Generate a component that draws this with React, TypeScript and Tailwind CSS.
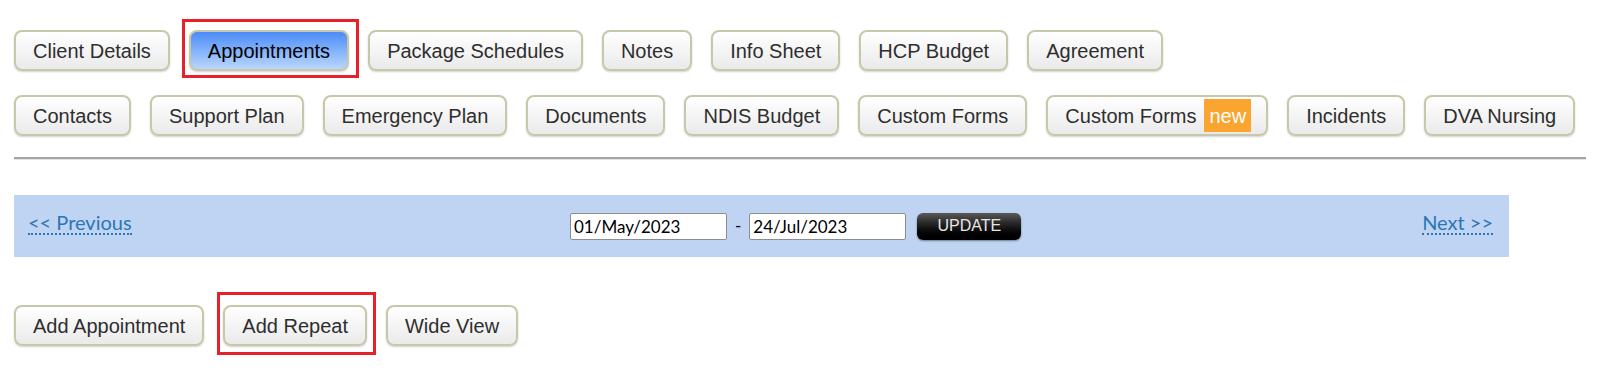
import React from 'react';

const topTabs = ['Client Details', 'Appointments', 'Package Schedules', 'Notes', 'Info Sheet', 'HCP Budget', 'Agreement'];
const secondTabs = ['Contacts', 'Support Plan', 'Emergency Plan', 'Documents', 'NDIS Budget', 'Custom Forms', 'Custom Forms new', 'Incidents', 'DVA Nursing'];

interface TabButtonProps {
    label: string;
    active?: boolean;
    badge?: string;
}

function TabButton({ label, active, badge }: TabButtonProps) {
    return (
        <button
            className={`flex h-[41px] items-center rounded-[8px] border-2 border-[#c9c7a9] px-[17px] text-[20px] leading-none shadow-[0_1px_2px_rgba(0,0,0,0.18)] ${active ? 'bg-linear-to-b from-[#4a8bf7] to-[#b9d6fb] text-black' : 'bg-linear-to-b from-white to-[#eaeaea] text-[#2e2e2e]'} ${badge ? 'pr-[15px]' : ''}`}
        >
            {label}
            {badge && (
                <span className="ml-[8px] flex h-[33px] items-center bg-[#f9a530] px-[5px] text-white">{badge}</span>
            )}
        </button>
    );
}

// red annotation box around an element, doesn't take space in the layout
function Marked({ children, box }: { children: React.ReactNode; box: string }) {
    return (
        <div className="relative">
            {children}
            <span className={`pointer-events-none absolute border-[3px] border-[#e6212b] ${box}`} />
        </div>
    );
}

export default function App() {
    return (
        <div className="min-h-[378px] bg-white px-[14px] pt-[30px] font-['Liberation_Sans',Arial,sans-serif]">
            <div className="flex gap-[19px]">
                {topTabs.map((t) =>
                    t === 'Appointments' ? (
                        <Marked key={t} box="left-[-7px] right-[-10px] top-[-11px] bottom-[-7px]">
                            <TabButton label={t} active />
                        </Marked>
                    ) : (
                        <TabButton key={t} label={t} />
                    )
                )}
            </div>
            <div className="mt-[24px] flex gap-[19px]">
                {secondTabs.map((t) =>
                    t === 'Custom Forms new' ? (
                        <TabButton key={t} label="Custom Forms" badge="new" />
                    ) : (
                        <TabButton key={t} label={t} />
                    )
                )}
            </div>

            <div className="mt-[21px] border-t-2 border-b border-t-[#a4a4a4] border-b-[#e6e6e6]" />

            <div className="mt-[35px] flex h-[62px] w-[1495px] items-center bg-[#bfd4f2] font-['Lato',sans-serif]">
                <div className="w-[556px] pl-[14px]">
                    <a className="mb-[6px] inline-block border-b-2 border-dotted border-[#2d76b5] text-[20px] leading-[22px] text-[#2d76b5]">&lt;&lt; Previous</a>
                </div>
                <div className="flex items-center">
                    <input
                        readOnly
                        value="01/May/2023"
                        className="h-[27px] w-[157px] rounded-[2px] border border-[#8d8d8d] bg-white pl-[3px] text-[17px] text-black outline-none"
                    />
                    <span className="px-[8px] text-[17px] text-black">-</span>
                    <input
                        readOnly
                        value="24/Jul/2023"
                        className="h-[27px] w-[157px] rounded-[2px] border border-[#8d8d8d] bg-white pl-[3px] text-[17px] text-black outline-none"
                    />
                    <button className="ml-[11px] h-[27px] w-[104px] rounded-[6px] bg-linear-to-b from-[#5a5a5a] via-[#1a1a1a] to-black font-['Liberation_Sans',Arial,sans-serif] text-[16px] text-[#e6e6e6] shadow-[0_1px_2px_rgba(0,0,0,0.4)]">
                        UPDATE
                    </button>
                </div>
                <div className="flex-1 pr-[16px] text-right">
                    <a className="mb-[6px] inline-block border-b-2 border-dotted border-[#2d76b5] text-[20px] leading-[22px] text-[#2d76b5]">Next &gt;&gt;</a>
                </div>
            </div>

            <div className="mt-[48px] flex gap-[19px]">
                <TabButton label="Add Appointment" />
                <Marked box="left-[-6px] right-[-9px] top-[-13px] bottom-[-9px]">
                    <TabButton label="Add Repeat" />
                </Marked>
                <TabButton label="Wide View" />
            </div>
        </div>
    );
}
